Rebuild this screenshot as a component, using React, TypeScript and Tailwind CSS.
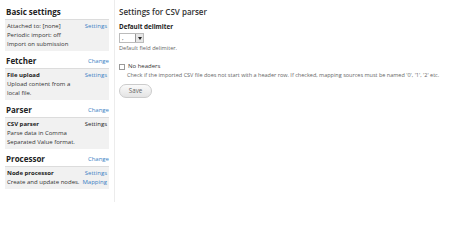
export default function App() {
  const sections = [
    {
      title: "Basic settings",
      action: null as string | null,
      name: null as string | null,
      lines: ["Attached to: [none]", "Periodic import: off", "Import on submission"],
      links: ["Settings"],
      plainLink: false,
    },
    {
      title: "Fetcher",
      action: "Change",
      name: "File upload",
      lines: ["Upload content from a", "local file."],
      links: ["Settings"],
      plainLink: false,
    },
    {
      title: "Parser",
      action: "Change",
      name: "CSV parser",
      lines: ["Parse data in Comma", "Separated Value format."],
      links: ["Settings"],
      plainLink: true,
    },
    {
      title: "Processor",
      action: "Change",
      name: "Node processor",
      lines: ["Create and update nodes."],
      links: ["Settings", "Mapping"],
      plainLink: false,
    },
  ];

  return (
    <div className="flex h-[202px] w-[474px] bg-white font-['Open_Sans',sans-serif] text-[#333]">
      {/* Sidebar */}
      <div className="w-[115px] shrink-0 border-r border-[#ececec] pl-[5px] pr-[5px] pt-[6px]">
        {sections.map((s, i) => (
          <div key={s.title} className={i === 0 ? "" : "pt-[4px]"}>
            <div className="flex h-[12px] items-center justify-between pl-[1px]">
              <h2 className="text-[8px] font-bold leading-none text-[#222]">{s.title}</h2>
              {s.action && <a className="text-[6px] leading-none text-[#3b7fc4]">{s.action}</a>}
            </div>
            <div className="mt-[1px] flex justify-between border-t border-[#dcdcdc] bg-[#f1f1f1] px-[2px] pb-[2px] pt-[2px]">
              <div className="text-[6px] leading-[9px]">
                {s.name && <div className="font-bold text-[#222]">{s.name}</div>}
                {s.lines.map((l) => (
                  <div key={l} className="whitespace-nowrap">
                    {l}
                  </div>
                ))}
              </div>
              <div className="flex flex-col items-end pl-[3px] text-[6px] leading-[9px]">
                {s.links.map((l) => (
                  <a key={l} className={s.plainLink ? "text-[#222]" : "text-[#3b7fc4]"}>
                    {l}
                  </a>
                ))}
              </div>
            </div>
          </div>
        ))}
      </div>

      {/* Main */}
      <div className="flex-1 pl-[4px] pt-[6px]">
        <h1 className="text-[8px] font-semibold leading-[12px] text-[#333]">Settings for CSV parser</h1>
        <div className="mt-[4px] text-[6.3px] font-bold leading-[9px] text-[#222]">Default delimiter</div>
        <div className="mt-[2px] flex h-[10px] w-[25px] items-center border border-[#bbb] bg-white">
          <span className="flex-1 pl-[2px] text-[6px] leading-none">,</span>
          <span className="flex h-full w-[8px] items-center justify-center border-l border-[#999] bg-[#e6e6e6]">
            <span className="h-0 w-0 border-x-[2px] border-t-[3px] border-x-transparent border-t-[#222]" />
          </span>
        </div>
        <div className="mt-[1px] text-[5.6px] leading-[8px] text-[#666]">Default field delimiter.</div>
        <div className="mt-[10px] flex items-center gap-[3px]">
          <span className="h-[6px] w-[6px] border border-[#999] bg-white" />
          <span className="text-[6px] leading-[9px] text-[#333]">No headers</span>
        </div>
        <div className="pl-[8px] text-[5.5px] leading-[9px] text-[#666]">
          Check if the imported CSV file does not start with a header row. If checked, mapping sources must be
          named '0', '1', '2' etc.
        </div>
        <button className="mt-[4px] block h-[14px] w-[33px] rounded-full border border-[#ccc] bg-gradient-to-b from-[#fafafa] to-[#e4e4e4] text-[6.2px] leading-none text-[#666]">
          Save
        </button>
      </div>
    </div>
  );
}
